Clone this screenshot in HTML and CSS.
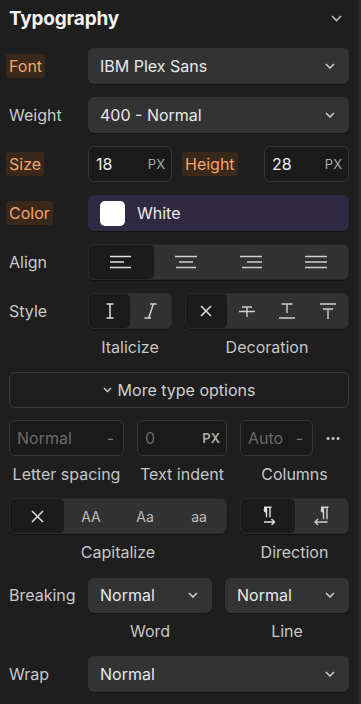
FILE: index.html
```html
<!DOCTYPE html>
<html lang="en">
<head>
    <meta charset="UTF-8">
    <meta name="viewport" content="width=device-width, initial-scale=1.0">
    <title>Typography</title>
    <link rel="stylesheet" href="styles.css">
</head>
<body>
    <div class="panel">
        <div class="panel-head">
            <h2>Typography</h2>
            <svg class="chev head-chev" width="11" height="7" viewBox="0 0 11 7"><path d="M1 1l4.5 4.5L10 1" fill="none" stroke="#bdbdbd" stroke-width="1.6"/></svg>
        </div>

        <!-- font -->
        <div class="row first">
            <span class="label"><span class="tag">Font</span></span>
            <div class="select">IBM Plex Sans<svg class="chev" width="10" height="6" viewBox="0 0 10 6"><path d="M1 1l4 4 4-4" fill="none" stroke="#d0d0d0" stroke-width="1.5"/></svg></div>
        </div>

        <div class="row">
            <span class="label">Weight</span>
            <div class="select">400 - Normal<svg class="chev" width="10" height="6" viewBox="0 0 10 6"><path d="M1 1l4 4 4-4" fill="none" stroke="#d0d0d0" stroke-width="1.5"/></svg></div>
        </div>

        <div class="row">
            <span class="label"><span class="tag">Size</span></span>
            <div class="size-pair">
                <div class="input"><span class="val">18</span><span class="unit">PX</span></div>
                <span class="label"><span class="tag">Height</span></span>
                <div class="input"><span class="val">28</span><span class="unit">PX</span></div>
            </div>
        </div>

        <div class="row">
            <span class="label"><span class="tag">Color</span></span>
            <div class="select color-select"><span class="swatch"></span>White</div>
        </div>

        <div class="row">
            <span class="label">Align</span>
            <div class="seg">
                <span class="seg-item on"><svg width="22" height="14" viewBox="0 0 22 14"><path d="M0 1.5h21M0 7h14M0 12.5h21" stroke="#e0e0e0" stroke-width="1.5"/></svg></span>
                <span class="seg-item"><svg width="22" height="14" viewBox="0 0 22 14"><path d="M0 1.5h22M4 7h14M1 12.5h20" stroke="#cfcfcf" stroke-width="1.5"/></svg></span>
                <span class="seg-item"><svg width="22" height="14" viewBox="0 0 22 14"><path d="M0 1.5h22M7 7h15M2 12.5h20" stroke="#cfcfcf" stroke-width="1.5"/></svg></span>
                <span class="seg-item"><svg width="22" height="14" viewBox="0 0 22 14"><path d="M0 1.5h22M0 7h22M0 12.5h22" stroke="#cfcfcf" stroke-width="1.5"/></svg></span>
            </div>
        </div>

        <div class="row">
            <span class="label">Style</span>
            <div class="pair style-pair">
                <div class="seg">
                    <span class="seg-item on"><svg width="8" height="16" viewBox="0 0 8 16"><path d="M0.5 1h7M4 1v14M0.5 15h7" fill="none" stroke="#e0e0e0" stroke-width="1.5"/></svg></span>
                    <span class="seg-item"><svg width="13" height="16" viewBox="0 0 13 16"><path d="M6 1h6.5M9.3 1L4.7 15M0.5 15h6.5" fill="none" stroke="#cfcfcf" stroke-width="1.5"/></svg></span>
                </div>
                <div class="seg">
                    <span class="seg-item on"><svg width="12" height="12" viewBox="0 0 12 12"><path d="M1 1l10 10M11 1L1 11" stroke="#e0e0e0" stroke-width="1.5"/></svg></span>
                    <span class="seg-item"><svg width="18" height="11" viewBox="0 0 18 11"><path d="M4 1h10M9 1v10M1 5.5h16" fill="none" stroke="#cfcfcf" stroke-width="1.4"/></svg></span>
                    <span class="seg-item"><svg width="18" height="16" viewBox="0 0 18 16"><path d="M3.5 1h11M9 1v9M1 15h16" fill="none" stroke="#cfcfcf" stroke-width="1.4"/></svg></span>
                    <span class="seg-item"><svg width="18" height="17" viewBox="0 0 18 17"><path d="M1 1h16M4 6h10M9 6v10" fill="none" stroke="#cfcfcf" stroke-width="1.4"/></svg></span>
                </div>
            </div>
        </div>
        <div class="sub">
            <span class="spacer"></span>
            <div class="pair style-pair">
                <span>Italicize</span>
                <span>Decoration</span>
            </div>
        </div>

        <button class="more"><svg width="9" height="6" viewBox="0 0 9 6"><path d="M1 1l3.5 3.5L8 1" fill="none" stroke="#cfcfcf" stroke-width="1.4"/></svg>More type options</button>

        <div class="row extra-row">
            <div class="pair extra-pair">
                <div class="input ghost"><span class="val">Normal</span><span class="unit">-</span></div>
                <div class="input ghost"><span class="val">0</span><span class="unit strong">PX</span></div>
                <div class="cols">
                    <div class="input ghost"><span class="val">Auto</span><span class="unit">-</span></div>
                    <span class="dots">&middot;&middot;&middot;</span>
                </div>
            </div>
        </div>
        <div class="sub">
            <div class="pair extra-pair">
                <span>Letter spacing</span>
                <span>Text indent</span>
                <span>Columns</span>
            </div>
        </div>

        <div class="row caps-row">
            <div class="pair caps-pair">
                <div class="seg">
                    <span class="seg-item on"><svg width="13" height="13" viewBox="0 0 13 13"><path d="M1 1l11 11M12 1L1 12" stroke="#e0e0e0" stroke-width="1.5"/></svg></span>
                    <span class="seg-item case">AA</span>
                    <span class="seg-item case">Aa</span>
                    <span class="seg-item case">aa</span>
                </div>
                <div class="seg">
                    <span class="seg-item on"><svg width="16" height="20" viewBox="0 0 16 20"><path d="M4 1.2h7.5M6.5 1.2v10M10 1.2v10" fill="none" stroke="#e0e0e0" stroke-width="1.4"/><path d="M6.5 1.2a2.8 2.8 0 0 0 0 5.6z" fill="#e0e0e0"/><path d="M4 16h10.5M11.5 13l3 3-3 3" fill="none" stroke="#e0e0e0" stroke-width="1.4"/></svg></span>
                    <span class="seg-item"><svg width="17" height="20" viewBox="0 0 17 20"><path d="M8 1.2h7.5M10.5 1.2v12M14 1.2v12M2 16h12.5" fill="none" stroke="#cfcfcf" stroke-width="1.4"/><path d="M10.5 1.2a2.8 2.8 0 0 0 0 5.6z" fill="#cfcfcf"/><path d="M5 13l-3 3 3 3" fill="none" stroke="#cfcfcf" stroke-width="1.4"/></svg></span>
                </div>
            </div>
        </div>
        <div class="sub">
            <div class="pair caps-pair">
                <span>Capitalize</span>
                <span>Direction</span>
            </div>
        </div>

        <div class="row break-row">
            <span class="label">Breaking</span>
            <div class="pair">
                <div class="select">Normal<svg class="chev" width="10" height="6" viewBox="0 0 10 6"><path d="M1 1l4 4 4-4" fill="none" stroke="#d0d0d0" stroke-width="1.5"/></svg></div>
                <div class="select">Normal<svg class="chev" width="10" height="6" viewBox="0 0 10 6"><path d="M1 1l4 4 4-4" fill="none" stroke="#d0d0d0" stroke-width="1.5"/></svg></div>
            </div>
        </div>
        <div class="sub">
            <span class="spacer"></span>
            <div class="pair">
                <span>Word</span>
                <span>Line</span>
            </div>
        </div>

        <div class="row wrap-row">
            <span class="label">Wrap</span>
            <div class="select">Normal<svg class="chev" width="10" height="6" viewBox="0 0 10 6"><path d="M1 1l4 4 4-4" fill="none" stroke="#d0d0d0" stroke-width="1.5"/></svg></div>
        </div>
    </div>
</body>
</html>
```

FILE: styles.css
```css
html, body {
    margin: 0;
    height: 100%;
    background-color: #1e1e1e;
}
body {
    font-family: Inter, "Noto Sans", sans-serif;
    color: #d0d0d0;
}
.panel {
    width: 340px;
    height: 704px;
    padding: 0 9px;
    border-right: 3px solid #2a2a2a;
    box-sizing: content-box;
}
.panel-head {
    display: flex;
    align-items: center;
    justify-content: space-between;
    height: 36px;
    padding-right: 7px;
}
.panel-head h2 {
    margin: 0;
    font-size: 19px;
    font-weight: 700;
    color: #f2f2f2;
    letter-spacing: -0.2px;
}
.row {
    display: flex;
    align-items: center;
    height: 36px;
    margin-top: 13px;
}
.row.first {
    margin-top: 12px;
}
.row > .select, .row > .seg, .row > .pair, .row > .size-pair {
    flex: 1;
}
.label, .spacer {
    flex: none;
    width: 79px;
    font-size: 16px;
    color: #c9c9c9;
}
.tag {
    display: inline-block;
    margin-left: -3px;
    padding: 1px 3px;
    line-height: 22px;
    border-radius: 3px;
    background-color: #3a281b;
    color: #f0a56c;
}
.select {
    display: flex;
    align-items: center;
    height: 36px;
    box-sizing: border-box;
    padding: 0 14px 0 12px;
    background-color: #333333;
    border-radius: 6px;
    font-size: 16px;
    color: #e8e8e8;
    box-shadow: 0 1px 1px rgba(0, 0, 0, 0.35);
}
.select .chev {
    margin-left: auto;
}
.color-select {
    background-color: #2f2944;
}
.swatch {
    width: 25px;
    height: 25px;
    border-radius: 5px;
    background: #ffffff;
    margin-right: 12px;
}
.size-pair {
    display: grid;
    grid-template-columns: 84px 92px 85px;
    align-items: center;
}
.size-pair .label {
    width: auto;
    padding-left: 13px;
}
.input {
    display: flex;
    align-items: center;
    height: 36px;
    box-sizing: border-box;
    padding: 0 6px 0 7px;
    border: 1px solid #363636;
    border-radius: 6px;
    background-color: #1a1a1a;
    font-size: 16px;
    color: #ededed;
}
.input .unit {
    margin-left: auto;
    font-size: 13px;
    color: #a9a9a9;
}
.seg {
    display: flex;
    height: 36px;
    box-sizing: border-box;
    background-color: #323232;
    border: 1px solid #2a2a2a;
    border-radius: 6px;
    box-shadow: 0 1px 1px rgba(0, 0, 0, 0.35);
}
.seg-item {
    flex: 1;
    display: flex;
    align-items: center;
    justify-content: center;
    border-radius: 5px;
}
.seg-item.on {
    background-color: #1b1b1b;
}
.case {
    font-size: 14px;
    color: #bdbdbd;
}
.pair {
    display: grid;
    grid-template-columns: 1fr 1fr;
    column-gap: 13px;
    align-items: center;
}
.style-pair {
    grid-template-columns: 84px 164px;
}
.extra-pair {
    width: 100%;
    grid-template-columns: 115px 90px 109px;
}
.caps-pair {
    width: 100%;
    grid-template-columns: 218px 109px;
}
.sub {
    display: flex;
    font-size: 16px;
    color: #c6c6c6;
    line-height: 20px;
    margin-top: 8px;
    text-align: center;
}
.sub .pair {
    flex: 1;
}
.more {
    display: flex;
    align-items: center;
    justify-content: center;
    gap: 6px;
    width: 100%;
    height: 36px;
    margin-top: 15px;
    background: transparent;
    border: 1px solid #3a3a3a;
    border-radius: 6px;
    font-family: inherit;
    font-size: 16px;
    color: #cfcfcf;
}
.extra-row {
    margin-top: 12px;
}
.ghost .val {
    color: #6a6a6a;
}
.ghost .unit {
    font-size: 16px;
    color: #7a7a7a;
    margin-right: 3px;
}
.ghost .unit.strong {
    font-size: 13px;
    font-weight: 600;
    color: #a9a9a9;
    margin-right: 0;
}
.cols {
    display: flex;
    align-items: center;
}
.cols .input {
    width: 73px;
}
.dots {
    margin-left: 12px;
    font-size: 18px;
    font-weight: 700;
    letter-spacing: -1px;
    color: #bcbcbc;
}
.caps-row {
    margin-top: 14px;
}
.break-row {
    margin-top: 15px;
}
.break-row .select {
    height: 35px;
}
.wrap-row {
    margin-top: 15px;
}
```
